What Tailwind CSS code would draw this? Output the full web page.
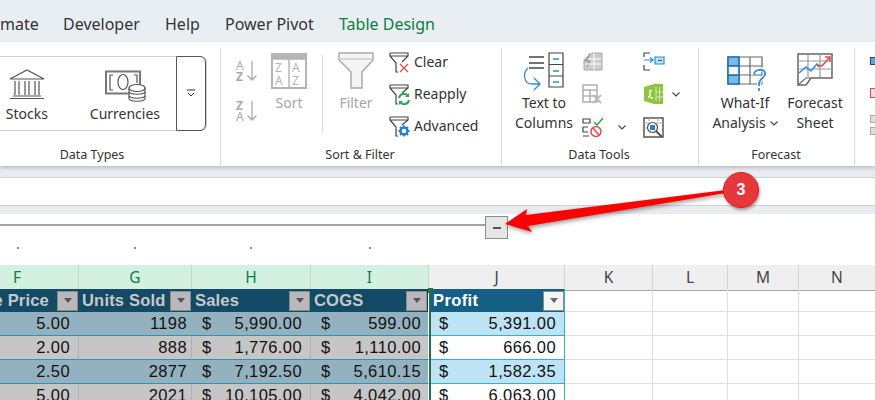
<!DOCTYPE html>
<html lang="en">
<head>
  <meta charset="UTF-8" />
  <title>Table Design ribbon</title>
  <script src="https://cdn.jsdelivr.net/npm/@tailwindcss/browser@4"></script>
</head>
<body class="w-[875px] h-[400px] overflow-hidden bg-white font-['Noto_Sans',sans-serif] text-[#333]">
<div class="relative w-[875px] h-[400px] overflow-hidden">

  <!-- tabs -->
  <div class="h-[42px] bg-[#e9eef3] flex items-center pt-[6px] text-[16px] text-[#333] whitespace-nowrap">
    <span class="w-[63px] text-right pr-[25px]">mate</span>
    <span class="w-[102px]">Developer</span>
    <span class="w-[60px]">Help</span>
    <span class="w-[114px]">Power Pivot</span>
    <span class="text-[#107c41]">Table Design</span>
  </div>

  <!-- ribbon -->
  <div class="h-[124px] bg-white flex shadow-[0_2px_4px_rgba(0,0,0,0.2)] relative text-[14px] leading-[20px] whitespace-nowrap">

    <!-- Data Types -->
    <div class="w-[220px] shrink-0 flex flex-col items-start">
      <div class="mt-[14px] h-[75px] w-[207px] flex border border-l-0 border-[#d0d0d0] rounded-r-md">
        <div class="w-[54px] flex flex-col items-center pt-[11px]">
          <svg width="38" height="32" viewBox="0 0 38 32" fill="none" stroke="#555" stroke-width="1.2"><path d="M2 11 19 2l17 9zM4 11h30M7 13v14M11 13v14M17 13v14M21 13v14M27 13v14M31 13v14M5 28h28M2 30.500h34"/></svg>
          <span class="mt-[4px]">Stocks</span>
        </div>
        <div class="w-[123px] flex flex-col items-center pt-[13px] pl-[22px] relative">
          <svg width="42" height="32" viewBox="0 0 42 32" fill="none" stroke="#555" stroke-width="1.2"><path d="M1 1.500h34v22H1z" stroke-width="2" stroke="#777"/><path d="M8 5H5v15h3M29 5h3v8"/><ellipse cx="18" cy="12" rx="5" ry="7.500"/><path d="M24 18h16v11c-2 3-14 3-16 0z" fill="#fff"/><ellipse cx="32" cy="18" rx="8" ry="3.500" fill="#fff"/><path d="M24 22c2 3 14 3 16 0M24 26c2 3 14 3 16 0"/></svg>
          <span class="mt-[2px] -ml-[2px]">Currencies</span>
        </div>
        <div class="-my-px w-[30px] border border-[#555] rounded-r-md flex items-center justify-center">
          <svg width="10" height="9" viewBox="0 0 10 9" fill="none" stroke="#333"><path d="M1 1h8M2 4l3 3 3-3"/></svg>
        </div>
      </div>
      <div class="mt-[14px] w-[184px] text-center text-[12.5px]">Data Types</div>
    </div>

    <!-- Sort & Filter -->
    <div class="w-[281px] shrink-0 flex flex-col border-l border-[#dcdcdc] mt-[6px] h-[118px]">
      <div class="flex h-[94px] shrink-0">
        <div class="w-[15px]"></div>
        <div class="w-[22px] mt-[12px] flex flex-col gap-[18px]">
          <svg class="overflow-visible" width="22" height="22" viewBox="0 0 22 22" fill="none" stroke="#aaa" stroke-width="1.3"><text x="0" y="10" font-size="12" font-family="Noto Sans" fill="#aaa" stroke="none">A</text><text x="0" y="21" font-size="12" font-weight="700" font-family="Noto Sans" fill="#aaa" stroke="none">Z</text><path d="M16 1v19M11.500 15.500 16 20l4.500-4.500"/></svg>
          <svg class="overflow-visible" width="22" height="22" viewBox="0 0 22 22" fill="none" stroke="#aaa" stroke-width="1.3"><text x="0" y="10" font-size="12" font-weight="700" font-family="Noto Sans" fill="#aaa" stroke="none">Z</text><text x="0" y="21" font-size="12" font-family="Noto Sans" fill="#aaa" stroke="none">A</text><path d="M16 1v19M11.500 15.500 16 20l4.500-4.500"/></svg>
        </div>
        <div class="w-[62px] flex flex-col items-center pt-[5px] text-[#a6a6a6]">
          <svg class="overflow-visible" width="36" height="36" viewBox="0 0 36 36" fill="none" stroke="#b4b4b4" stroke-width="1.500"><path d="M1 1h34v34H1z" fill="#fff" stroke-width="2"/><path d="M1 1h34v5H1z" fill="#b4b4b4"/><path d="M18 6v29" stroke-width="1.500"/><text x="4" y="19" font-size="12" font-family="Noto Sans" fill="#b4b4b4" stroke="none">Z</text><text x="4" y="32" font-size="12" font-family="Noto Sans" fill="#b4b4b4" stroke="none">A</text><text x="21" y="19" font-size="12" font-family="Noto Sans" fill="#b4b4b4" stroke="none">A</text><text x="21" y="32" font-size="12" font-family="Noto Sans" fill="#b4b4b4" stroke="none">Z</text></svg>
          <span class="mt-[4px]">Sort</span>
        </div>
        <div class="w-px h-[78px] mt-[7px] ml-[2px] bg-[#dcdcdc]"></div>
        <div class="w-[66px] flex flex-col items-center pt-[4px] text-[#a6a6a6]">
          <svg width="36" height="37" viewBox="0 0 36 37" fill="#f4f4f4" stroke="#aaa" stroke-width="1.500"><path d="M1 1h34v7L24 20v16H13V20L1 8z"/><path d="M1 7h34" stroke="#ccc"/></svg>
          <span class="mt-[4px]">Filter</span>
        </div>
        <div class="flex flex-col text-[#333] pt-[4px] gap-[12px]">
          <div class="flex items-center h-[20px] gap-[4px]">
            <svg width="21" height="22" viewBox="0 0 21 22" fill="none" stroke="#444" stroke-width="1.200"><path d="M1 2h18v3L13 11M1 2v3l6 7v9h2M1 5h18"/><path d="M11 13l8 8M19 13l-8 8" stroke="#e8484d" stroke-width="1.300"/></svg>
            <span>Clear</span>
          </div>
          <div class="flex items-center h-[20px] gap-[4px]">
            <svg width="21" height="22" viewBox="0 0 21 22" fill="none" stroke="#444" stroke-width="1.200"><path d="M1 2h18v3l-6 5M1 2v3l6 7v9h2M1 5h18"/><path d="M10 15a5 5 0 0 1 9-2M20 17a5 5 0 0 1-9 2" stroke="#2aa84f" stroke-width="2"/><path d="M20 10v4h-4zM10 22v-4h4z" fill="#2aa84f" stroke="none"/></svg>
            <span>Reapply</span>
          </div>
          <div class="flex items-center h-[20px] gap-[4px]">
            <svg width="21" height="22" viewBox="0 0 21 22" fill="none" stroke="#444" stroke-width="1.200"><path d="M1 2h18v3l-6 5M1 2v3l6 7v9h2M1 5h18"/><circle cx="15" cy="16" r="3.500" stroke="#1f84d0" stroke-width="2.500"/><path d="M15 10.500v2M15 19.500v2M9.500 16h2M18.500 16h2M11 12l1.500 1.500M19 12l-1.500 1.500M11 20l1.500-1.500M19 20l-1.500-1.500" stroke="#1f84d0" stroke-width="1.800"/></svg>
            <span>Advanced</span>
          </div>
        </div>
      </div>
      <div class="mt-[3px] w-[278px] text-center text-[12.5px]">Sort &amp; Filter</div>
    </div>

    <!-- Data Tools -->
    <div class="w-[197px] shrink-0 flex flex-col border-l border-[#dcdcdc] mt-[6px] h-[118px]">
      <div class="flex h-[94px] shrink-0">
        <div class="w-[84px] flex flex-col items-center pt-[4px]">
          <svg width="42" height="40" viewBox="0 0 42 40" fill="none" stroke="#444" stroke-width="1.200" class="mb-[1px] overflow-visible"><path d="M6 5h15M6 11h15M6 16h15" stroke-width="1.400"/><path d="M26 1h14v34H26zM26 12.500h14M26 24h14"/><path d="M30 7h6M30 19h6M30 30h6" stroke="#2b8fd8" stroke-width="1.500"/><path d="M5 16C0 20 0 32 9 32h7M11 26l6 6-6 6" stroke="#2b8fd8" stroke-width="1.300"/></svg>
          <span>Text to</span><span>Columns</span>
        </div>
        <div class="w-[61px] -ml-[4px] flex flex-col pt-[4px] gap-[13px]">
          <svg width="21" height="19" viewBox="0 0 21 19" fill="#ccc" stroke="#aaa"><path d="M2 18V8l8-7h10v17z" /><path d="M8 1 3 9h5L5 15" stroke="#999" fill="#999"/><path d="M12 1v17M19 7H5M19 12H3" stroke="#fff"/></svg>
          <svg width="21" height="20" viewBox="0 0 21 20" fill="none" stroke="#b0b0b0" stroke-width="1.500"><path d="M1 1h14v17H1zM1 6h14M1 12h14M8 6v12"/><path d="M11 11l8 8M19 11l-8 8" stroke="#bbb" stroke-width="1.800"/></svg>
          <div class="flex items-center gap-[15px]">
            <svg width="21" height="21" viewBox="0 0 21 21" fill="none" stroke="#444" stroke-width="1.200"><path d="M1 2h7v4H1zM1 10h5M1 10v5h5M1 19h6"/><path d="M12 5l3 3 6-7" stroke="#2aa84f" stroke-width="1.500"/><circle cx="14" cy="14.500" r="5" stroke="#e8484d" stroke-width="1.500"/><path d="M11 11l6 7" stroke="#e8484d" stroke-width="1.500"/></svg>
            <svg width="8" height="5" viewBox="0 0 8 5" fill="none" stroke="#444" stroke-width="1.100"><path d="M.5.500 4 4 7.500.500"/></svg>
          </div>
        </div>
        <div class="flex flex-col pt-[4px] gap-[13px]">
          <svg width="22" height="19" viewBox="0 0 22 19" fill="none" stroke="#444" stroke-width="1.200"><path d="M7 1H1v4M1 13v5h6"/><path d="M1 8h9M7 5.500 10 8l-3 2.500" stroke="#2b8fd8"/><path d="M12 5h9v7h-9z" stroke="#2b8fd8" fill="#bfe0f5"/><path d="M15 8.500h4" stroke="#555"/></svg>
          <div class="flex items-center gap-[8px]">
            <svg width="21" height="20" viewBox="0 0 21 20" fill="#8cc63f"><path d="M1 3 11 0h9v20h-9L1 17z"/><path d="M13 3v14M16.500 3v14M13 8h7M13 13h7" stroke="#d5ecb4" stroke-width="1"/><path d="M5 13h2V6M7 6l2 1M8 14h2" stroke="#fff" stroke-width="1.300" fill="none"/></svg>
            <svg width="8" height="5" viewBox="0 0 8 5" fill="none" stroke="#444" stroke-width="1.100"><path d="M.5.500 4 4 7.500.500"/></svg>
          </div>
          <svg width="21" height="21" viewBox="0 0 21 21" fill="none" stroke="#555" stroke-width="1.200"><path d="M1 1h19v19H1z" stroke-width="1.500"/><path d="M1 6h19M1 11h4M6 1v3M15 1v3" stroke="#aaa"/><circle cx="9.500" cy="10.500" r="5" fill="#fff"/><path d="M7 8h5v5H7z" fill="#2b7fc4" stroke="none"/><path d="M13 14l6 6" stroke-width="2"/></svg>
        </div>
      </div>
      <div class="mt-[3px] w-[194px] text-center text-[12.5px]">Data Tools</div>
    </div>

    <!-- Forecast -->
    <div class="w-[157px] shrink-0 flex flex-col border-x border-[#dcdcdc] mt-[6px] h-[118px]">
      <div class="flex h-[94px] shrink-0">
        <div class="w-[92px] flex flex-col items-center pt-[8px]">
          <svg width="42" height="36" viewBox="0 0 42 36" fill="none" stroke="#666" stroke-width="1.200" class="ml-[6px] mb-[1px]"><path d="M1 1h34v27H1zM12 1v27M23 1v27M1 10h34M1 19h34"/><path d="M1 1h11v9H1zM1 19h11v9H1z" fill="#7cb8ea" stroke="#1c6fb3" stroke-width="1.500"/><path d="M1 10h11v9H1z" fill="#f6f6f6" stroke="#1c6fb3" stroke-width="1.500"/><path d="M26 19c0-7 11-8 12-2 1 5-6 5-6 11v3M32 33v3" stroke="#fff" stroke-width="4"/><path d="M27 19c0-6 10-7 11-2 1 5-6 5-6 11v2M32 32v3" stroke="#2b8fd8" stroke-width="1.800"/></svg>
          <span>What-If</span>
          <span class="flex items-center gap-[4px]">Analysis <svg width="8" height="5" viewBox="0 0 8 5" fill="none" stroke="#444" stroke-width="1.100"><path d="M.5.500 4 4 7.500.500"/></svg></span>
        </div>
        <div class="w-[48px] flex flex-col items-center pt-[5px]">
          <svg width="36" height="34" viewBox="0 0 36 34" fill="none" stroke="#666" stroke-width="1.200" class="mb-[6px]"><path d="M1 1h34v24H14l-5 7H1z" stroke-width="1.500"/><path d="M11 1v23M23 1v23M1 8h34M1 16h34" stroke="#999"/><path d="M1 32l8-7h5" /><path d="M2 20l7-6 5 4 6-7 2 3" stroke="#2b8fd8" stroke-width="1.500"/><path d="M20 12l5 1 8-9M28 4h5v5" stroke="#e8484d" stroke-width="1.500"/></svg>
          <span>Forecast</span><span>Sheet</span>
        </div>
      </div>
      <div class="mt-[3px] w-[154px] text-center text-[12.5px]">Forecast</div>
    </div>

    <!-- next group, cut off by the window -->
    <div class="flex flex-col pl-[15px] pt-[15px]">
      <div class="w-[8px] h-[8px] border-[1.500px] border-[#444] bg-[#5aa5e0]"></div>
      <div class="w-[8px] h-[10px] mt-[23px] border-[1.500px] border-[#e8484d] bg-[#fbdcdc]"></div>
      <div class="flex flex-col gap-[4px] mt-[17px]">
        <div class="w-[8px] h-[8px] border-[1.500px] border-[#aaa] bg-[#ddd]"></div>
        <div class="w-[8px] h-[8px] border-[1.500px] border-[#aaa] bg-[#ddd]"></div>
      </div>
    </div>
  </div>

  <!-- formula bar -->
  <div class="h-[11px] bg-[#e8ecf0]"></div>
  <div class="h-[29px] bg-white border-y border-[#cfd2d5]"></div>
  <div class="h-[8px] bg-[#e8ecf0]"></div>

  <!-- outline area -->
  <div class="h-[51px] bg-white flex flex-col">
    <div class="flex items-start h-[23px] mt-[2px]">
      <div class="w-[485px] h-[2px] mt-[8px] bg-[#a3a3a3]"></div>
      <div class="w-[23px] h-[23px] border border-[#8c8c8c] bg-[#e6e6e6] flex items-center justify-center">
        <div class="w-[8px] h-[2px] bg-[#555]"></div>
      </div>
    </div>
    <div class="flex mt-[8px] h-[2px]">
      <div class="w-[17px]"></div><div class="w-[2px] h-[2px] bg-[#888]"></div>
      <div class="w-[115px]"></div><div class="w-[2px] h-[2px] bg-[#888]"></div>
      <div class="w-[114px]"></div><div class="w-[2px] h-[2px] bg-[#888]"></div>
      <div class="w-[117px]"></div><div class="w-[2px] h-[2px] bg-[#888]"></div>
    </div>
  </div>

  <!-- column letters -->
  <div class="grid grid-cols-[79px_113px_119px_118px_136px_88px_75px_71px_76px] h-[24px] text-[15.5px] leading-[24px] text-center">
    <div class="bg-[#d3f0e0] text-[#107c41] border-r border-[#c6d6cc] border-b-[2px] border-b-[#217346] pl-[13px] text-left">F</div>
    <div class="bg-[#d3f0e0] text-[#107c41] border-r border-[#c6d6cc] border-b-[2px] border-b-[#217346]">G</div>
    <div class="bg-[#d3f0e0] text-[#107c41] border-r border-[#c6d6cc] border-b-[2px] border-b-[#217346]">H</div>
    <div class="bg-[#d3f0e0] text-[#107c41] border-r border-[#c6d6cc] border-b-[2px] border-b-[#217346]">I</div>
    <div class="bg-[#efefef] text-[#444] border-r border-[#d4d4d4] border-b border-b-[#a6a6a6]">J</div>
    <div class="bg-[#efefef] text-[#444] border-r border-[#d4d4d4] border-b border-b-[#a6a6a6]">K</div>
    <div class="bg-[#efefef] text-[#444] border-r border-[#d4d4d4] border-b border-b-[#a6a6a6]">L</div>
    <div class="bg-[#efefef] text-[#444] border-r border-[#d4d4d4] border-b border-b-[#a6a6a6]">M</div>
    <div class="bg-[#efefef] text-[#444] border-b border-b-[#a6a6a6]">N</div>
  </div>

  <!-- sheet -->
  <div class="relative flex font-['Liberation_Sans',sans-serif] text-[16.5px] tracking-[0.4px] leading-[23px] text-[#111]">

    <!-- selected columns F:I -->
    <div class="w-[431px] shrink-0 border-r-[2px] border-[#217346] grid grid-cols-[79px_113px_119px_118px] grid-rows-[23px_24px_24px_24px_24px]">
      <div class="bg-[#134a66] text-[#c8c8c8] font-bold flex items-center justify-end pr-px whitespace-nowrap overflow-hidden tracking-[0.2px]"><span>e Price</span><span class="w-[21px] h-[20px] shrink-0 bg-[#b9b9bc] border border-[#8a8a8a] flex items-center justify-center ml-[8px]"><span class="border-x-[4px] border-x-transparent border-t-[5px] border-t-[#555]"></span></span></div>
      <div class="bg-[#134a66] text-[#c8c8c8] font-bold flex items-center justify-between pl-[3px] pr-px whitespace-nowrap tracking-[0.2px]"><span>Units Sold</span><span class="w-[21px] h-[20px] shrink-0 bg-[#b9b9bc] border border-[#8a8a8a] flex items-center justify-center"><span class="border-x-[4px] border-x-transparent border-t-[5px] border-t-[#555]"></span></span></div>
      <div class="bg-[#134a66] text-[#c8c8c8] font-bold flex items-center justify-between pl-[3px] pr-px tracking-[0.2px]"><span>Sales</span><span class="w-[21px] h-[20px] shrink-0 bg-[#b9b9bc] border border-[#8a8a8a] flex items-center justify-center"><span class="border-x-[4px] border-x-transparent border-t-[5px] border-t-[#555]"></span></span></div>
      <div class="bg-[#134a66] text-[#c8c8c8] font-bold flex items-center justify-between pl-[3px] pr-px border-r border-white tracking-[0.2px]"><span>COGS</span><span class="w-[21px] h-[20px] shrink-0 bg-[#b9b9bc] border border-[#8a8a8a] flex items-center justify-center"><span class="border-x-[4px] border-x-transparent border-t-[5px] border-t-[#555]"></span></span></div>

      <div class="bg-[#93b1bf] border-b border-[#3a8db5] text-right pr-[9px]">5.00</div>
      <div class="bg-[#93b1bf] border-b border-[#3a8db5] text-right pr-[5px]">1198</div>
      <div class="bg-[#93b1bf] border-b border-[#3a8db5] flex justify-between pl-[10px] pr-[9px]"><span>$</span><span>5,990.00</span></div>
      <div class="bg-[#93b1bf] border-b border-[#3a8db5] flex justify-between pl-[10px] pr-[7px] border-r border-r-white"><span>$</span><span>599.00</span></div>

      <div class="bg-[#c6c6c6] border-b border-[#3a8db5] border-r border-r-[#b0b0b0] text-right pr-[8px]">2.00</div>
      <div class="bg-[#c6c6c6] border-b border-[#3a8db5] border-r border-r-[#b0b0b0] text-right pr-[4px]">888</div>
      <div class="bg-[#c6c6c6] border-b border-[#3a8db5] border-r border-r-[#b0b0b0] flex justify-between pl-[10px] pr-[8px]"><span>$</span><span>1,776.00</span></div>
      <div class="bg-[#c6c6c6] border-b border-[#3a8db5] flex justify-between pl-[10px] pr-[7px] border-r border-r-white"><span>$</span><span>1,110.00</span></div>

      <div class="bg-[#93b1bf] border-b border-[#3a8db5] text-right pr-[9px]">2.50</div>
      <div class="bg-[#93b1bf] border-b border-[#3a8db5] text-right pr-[5px]">2877</div>
      <div class="bg-[#93b1bf] border-b border-[#3a8db5] flex justify-between pl-[10px] pr-[9px]"><span>$</span><span>7,192.50</span></div>
      <div class="bg-[#93b1bf] border-b border-[#3a8db5] flex justify-between pl-[10px] pr-[7px] border-r border-r-white"><span>$</span><span>5,610.15</span></div>

      <div class="bg-[#c6c6c6] border-b border-[#3a8db5] border-r border-r-[#b0b0b0] text-right pr-[8px]">5.00</div>
      <div class="bg-[#c6c6c6] border-b border-[#3a8db5] border-r border-r-[#b0b0b0] text-right pr-[4px]">2021</div>
      <div class="bg-[#c6c6c6] border-b border-[#3a8db5] border-r border-r-[#b0b0b0] flex justify-between pl-[10px] pr-[8px]"><span>$</span><span>10,105.00</span></div>
      <div class="bg-[#c6c6c6] border-b border-[#3a8db5] flex justify-between pl-[10px] pr-[7px] border-r border-r-white"><span>$</span><span>4,042.00</span></div>
    </div>

    <!-- column J -->
    <div class="w-[134px] shrink-0 grid grid-rows-[23px_24px_24px_24px_24px] border-r border-[#33aede]">
      <div class="bg-[#155f85] text-white font-bold flex items-center justify-between pl-[2px]"><span>Profit</span><span class="w-[21px] h-[20px] bg-[#f4f4f4] border border-[#8a8a8a] flex items-center justify-center"><span class="border-x-[4px] border-x-transparent border-t-[5px] border-t-[#666]"></span></span></div>
      <div class="bg-[#bde3f4] border-b border-[#33aede] flex justify-between pl-[8px] pr-[8px]"><span>$</span><span>5,391.00</span></div>
      <div class="bg-white border-b border-[#33aede] flex justify-between pl-[8px] pr-[8px]"><span>$</span><span>666.00</span></div>
      <div class="bg-[#bde3f4] border-b border-[#33aede] flex justify-between pl-[8px] pr-[8px]"><span>$</span><span>1,582.35</span></div>
      <div class="bg-white border-b border-[#33aede] flex justify-between pl-[8px] pr-[8px]"><span>$</span><span>6,063.00</span></div>
    </div>

    <!-- empty cells K:N -->
    <div class="flex-1 grid grid-cols-[88px_75px_71px_76px] grid-rows-[23px_24px_24px_24px_24px]">
      <div class="border-r border-b border-[#e0e0e0]"></div><div class="border-r border-b border-[#e0e0e0]"></div><div class="border-r border-b border-[#e0e0e0]"></div><div class="border-b border-[#e0e0e0]"></div>
      <div class="border-r border-b border-[#e0e0e0]"></div><div class="border-r border-b border-[#e0e0e0]"></div><div class="border-r border-b border-[#e0e0e0]"></div><div class="border-b border-[#e0e0e0]"></div>
      <div class="border-r border-b border-[#e0e0e0]"></div><div class="border-r border-b border-[#e0e0e0]"></div><div class="border-r border-b border-[#e0e0e0]"></div><div class="border-b border-[#e0e0e0]"></div>
      <div class="border-r border-b border-[#e0e0e0]"></div><div class="border-r border-b border-[#e0e0e0]"></div><div class="border-r border-b border-[#e0e0e0]"></div><div class="border-b border-[#e0e0e0]"></div>
      <div class="border-r border-b border-[#e0e0e0]"></div><div class="border-r border-b border-[#e0e0e0]"></div><div class="border-r border-b border-[#e0e0e0]"></div><div class="border-b border-[#e0e0e0]"></div>
    </div>

    <!-- selection handle -->
    <div class="absolute left-[428px] -top-[1px] w-[5px] h-[5px] bg-[#217346]"></div>
  </div>

  <!-- annotation arrow and badge -->
  <svg class="absolute left-0 top-0 pointer-events-none" width="875" height="400" viewBox="0 0 875 400">
    <polygon points="505,224 527,209 526,215 726,190 726,193 528,226 532,232" fill="#ff0000" class="drop-shadow-[1px_2px_2px_rgba(0,0,0,0.4)]"/>
  </svg>
  <div class="absolute left-[723px] top-[172px] w-[36px] h-[36px] rounded-full bg-[#e4383c] border-[1.500px] border-[#f5141c] flex items-center justify-center text-white font-['Liberation_Sans',sans-serif] font-bold text-[16px] shadow-[1px_2px_3px_rgba(0,0,0,0.35)]">3</div>
</div>
</body>
</html>
